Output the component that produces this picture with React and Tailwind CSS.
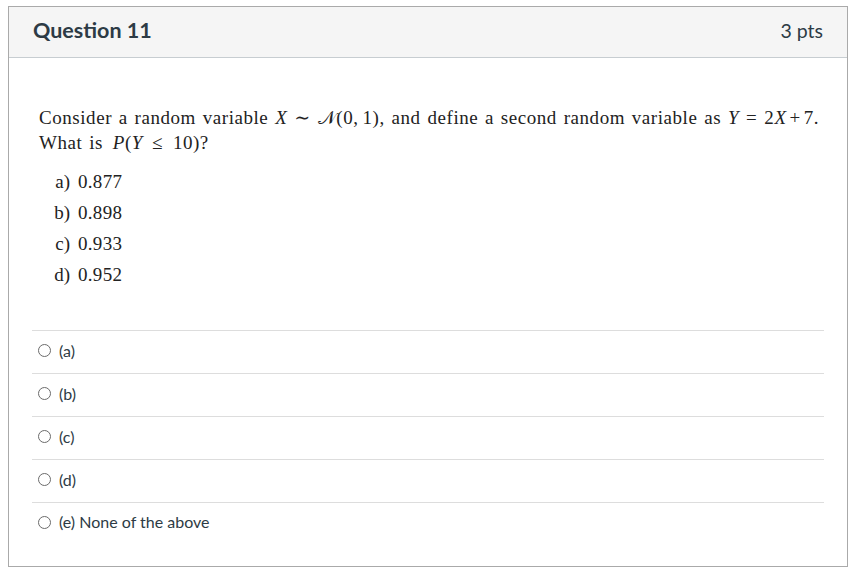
import React from "react";

const serif = { fontFamily: '"Liberation Serif", "DejaVu Serif", serif' };

function Radio() {
  return <span className="inline-block w-[13px] h-[13px] rounded-full border-[1.5px] border-[#6b6b6b] bg-white shrink-0" />;
}

const answers = ["(a)", "(b)", "(c)", "(d)", "(e) None of the above"];
const choices = [
  ["a)", "0.877"],
  ["b)", "0.898"],
  ["c)", "0.933"],
  ["d)", "0.952"],
];

function Op({ children }) {
  return <span className="mx-[7px]">{children}</span>;
}

export default function App() {
  return (
    <div className="w-[855px] h-[570px] bg-white pt-[6px] pl-[8px]" style={{ fontFamily: "Lato, 'Liberation Sans', sans-serif" }}>
      <div className="w-[840px] h-[561px] border border-[#aaaaaa] flex flex-col overflow-hidden">
        <div className="h-[51px] shrink-0 bg-[#f5f5f5] border-b border-[#c7cdd1] flex items-center justify-between px-[24px] pb-[3px] text-[#2d3b45]">
          <span className="text-[21.5px] font-bold leading-none">Question 11</span>
          <span className="text-[19.5px] leading-none">3 pts</span>
        </div>
        <div className="shrink-0 pl-[30px] pr-[10px] pt-[47px] text-[#222]" style={serif}>
          <p className="text-[19px] leading-[25px] tracking-[0.55px] [word-spacing:1.5px] whitespace-nowrap">
            Consider a random variable <i>X</i><Op>∼</Op>𝒩(0,<span className="ml-[4px]">1)</span>, and define a second random variable as <i>Y</i><Op>=</Op>2<i>X</i><span className="mx-[3px]">+</span>7.
            <br />
            What is <span className="ml-[3px]"><i>P</i></span>(<i>Y</i><span className="ml-[9px] mr-[10px]">≤</span>10)?
          </p>
          <div className="mt-[16px] flex flex-col gap-[10px] pl-[11px] text-[19px] leading-[21px]">
            {choices.map(([l, v]) => (
              <div key={l} className="flex gap-[8px]">
                <span className="w-[20px] text-right">{l}</span>
                <span className="tracking-[0.3px]">{v}</span>
              </div>
            ))}
          </div>
        </div>
        <div className="shrink-0 mx-[23px] mt-[45px] text-[#2d3b45] text-[16px]">
          {answers.map((a) => (
            <div key={a} className="h-[43px] last:h-[42px] border-t border-[#dddddd] flex items-center gap-[8px] pl-[6px] pb-[3px]">
              <Radio />
              <span>{a}</span>
            </div>
          ))}
        </div>
      </div>
    </div>
  );
}
